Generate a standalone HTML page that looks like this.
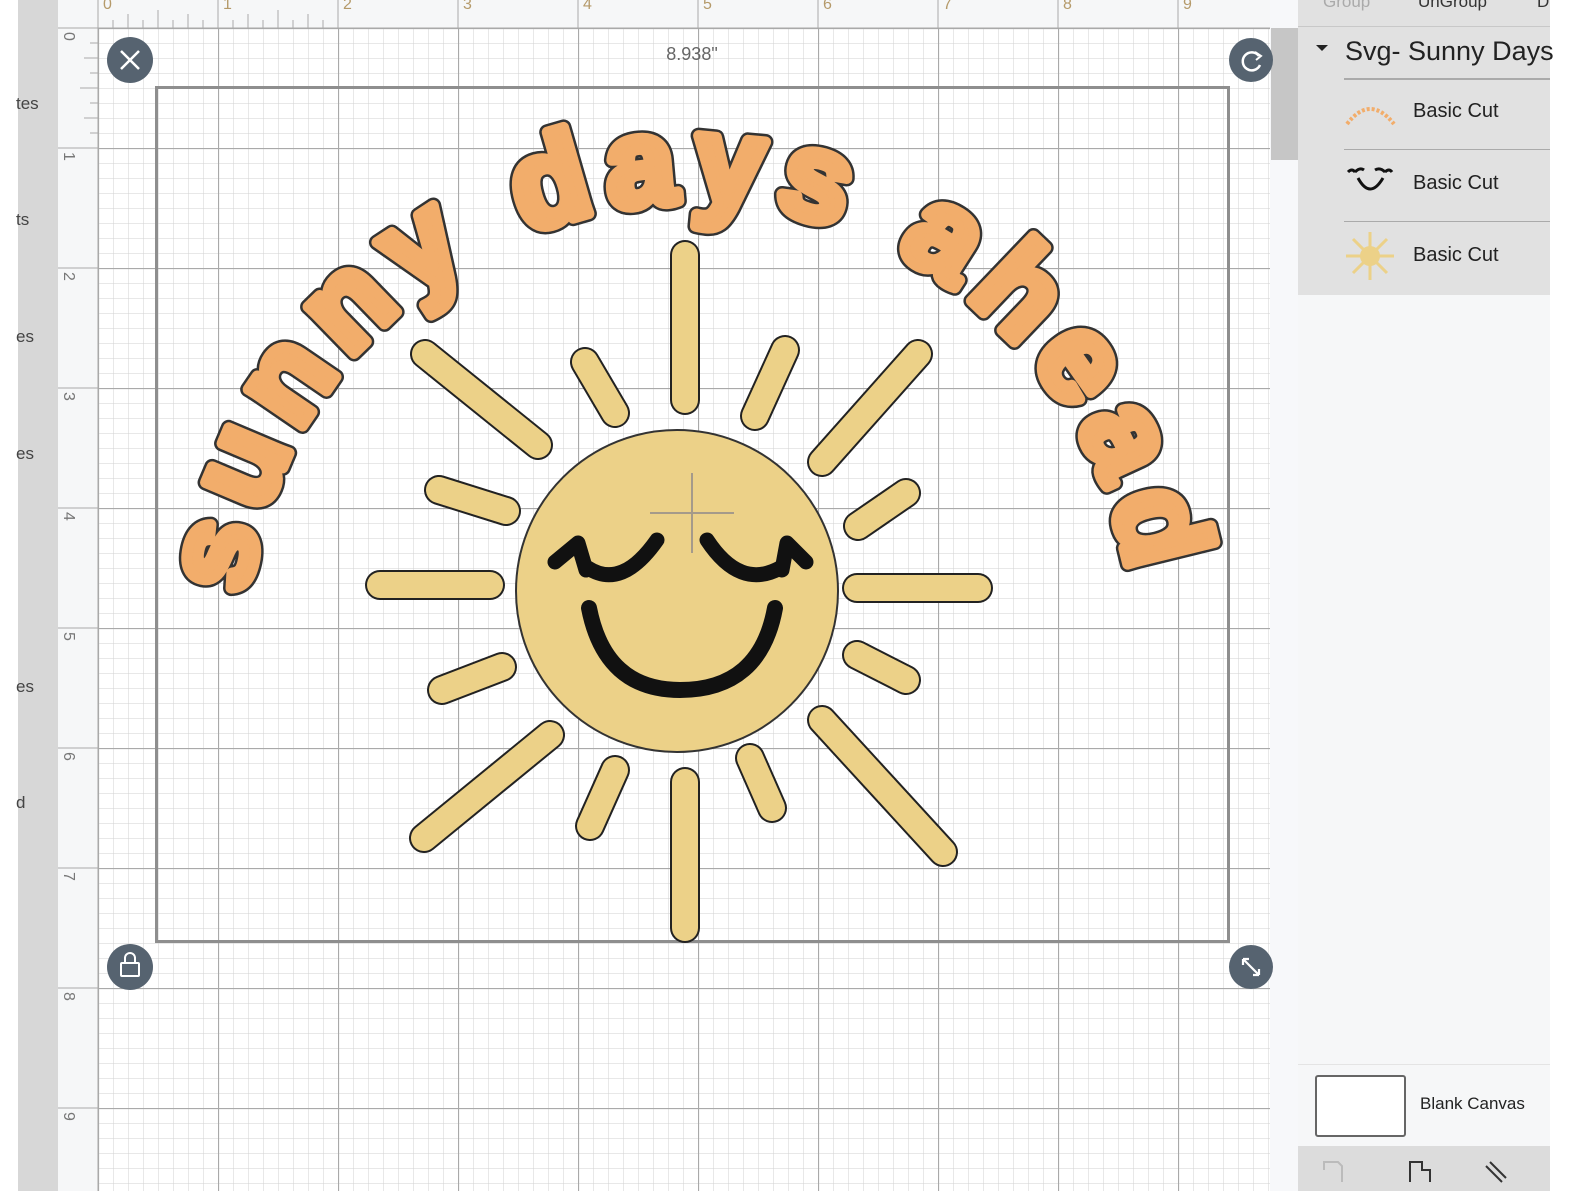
<!DOCTYPE html>
<html><head><meta charset="utf-8"><style>
body{margin:0;width:1588px;height:1191px;overflow:hidden;background:#fff;font-family:"Liberation Sans",sans-serif;position:relative}
.abs{position:absolute}
</style></head><body>
<div class="abs" style="left:18px;top:0;width:40px;height:1191px;background:#d7d7d7"></div>
<div class="abs" style="left:16px;top:94px;font-size:17px;color:#444">tes</div>
<div class="abs" style="left:16px;top:210px;font-size:17px;color:#444">ts</div>
<div class="abs" style="left:16px;top:327px;font-size:17px;color:#444">es</div>
<div class="abs" style="left:16px;top:444px;font-size:17px;color:#444">es</div>
<div class="abs" style="left:16px;top:677px;font-size:17px;color:#444">es</div>
<div class="abs" style="left:16px;top:793px;font-size:17px;color:#444">d</div>
<svg class="abs" style="left:0;top:0" width="1298" height="1191" viewBox="0 0 1298 1191">
<defs>
<pattern id="mn" x="98" y="28" width="15" height="15" patternUnits="userSpaceOnUse"><path d="M0 0V15M0 0H15" stroke="#d2d2d2" stroke-width="1" fill="none"/></pattern>
<pattern id="mj" x="98" y="28" width="120" height="120" patternUnits="userSpaceOnUse"><path d="M0.5 0V120M0 0.5H120" stroke="#a9a9a9" stroke-width="1.2" fill="none"/></pattern>
</defs>
<rect x="58" y="0" width="1240" height="1191" fill="#f6f7f8"/>
<rect x="98" y="28" width="1172" height="1163" fill="#fff"/>
<rect x="98" y="28" width="1172" height="1163" fill="url(#mn)"/>
<rect x="98" y="28" width="1172" height="1163" fill="url(#mj)"/>
<line x1="98" y1="0" x2="98" y2="1191" stroke="#a9a9a9"/>
<line x1="58" y1="28" x2="1270" y2="28" stroke="#a9a9a9"/>
<g stroke="#aaa" stroke-width="1">
<path d="M113 20V28M128 14V28M143 20V28M158 10V28M173 20V28M188 14V28M203 20V28"/>
<path d="M233 20V28M248 14V28M263 20V28M278 10V28M293 20V28M308 14V28M323 20V28"/>
<path d="M218 0V28M338 0V28M458 0V28M578 0V28M698 0V28M818 0V28M938 0V28M1058 0V28M1178 0V28"/>
<path d="M90 43H98M84 58H98M90 73H98M80 88H98M90 103H98M84 118H98M90 133H98M58 148H98M58 268H98M58 388H98M58 508H98M58 628H98M58 748H98M58 868H98M58 988H98M58 1108H98"/>
</g>
<g font-size="16" fill="#b59a6a">
<text x="103" y="9">0</text><text x="223" y="9">1</text><text x="343" y="9">2</text><text x="463" y="9">3</text><text x="583" y="9">4</text><text x="703" y="9">5</text><text x="823" y="9">6</text><text x="943" y="9">7</text><text x="1063" y="9">8</text><text x="1183" y="9">9</text>
</g>
<g font-size="16" fill="#777">
<text transform="translate(64,32) rotate(90)">0</text><text transform="translate(64,152) rotate(90)">1</text><text transform="translate(64,272) rotate(90)">2</text><text transform="translate(64,392) rotate(90)">3</text><text transform="translate(64,512) rotate(90)">4</text><text transform="translate(64,632) rotate(90)">5</text><text transform="translate(64,752) rotate(90)">6</text><text transform="translate(64,872) rotate(90)">7</text><text transform="translate(64,992) rotate(90)">8</text><text transform="translate(64,1112) rotate(90)">9</text>
</g>
<rect x="1270" y="0" width="28" height="1191" fill="#f7f8fa"/>
<rect x="1271" y="28" width="27" height="132" fill="#c6c6c6"/>
<rect x="156.5" y="87.5" width="1072" height="854" fill="none" stroke="#8e8e8e" stroke-width="3"/>
<text x="692" y="60" font-size="18" fill="#666" text-anchor="middle">8.938"</text>
<!-- rays -->
<g stroke-linecap="round" fill="none">
<g stroke="#222" stroke-width="30">
<path id="rays" d="M685 255V400M685 782V928M380 585H490M857 588H978M425 354L538 445M918 354L822 462M424 838L550 735M822 720L943 852M585 362L615 413M785 350L755 416M439 490L506 511M906 493L858 526M442 690L502 667M857 655L906 680M615 770L590 826M750 758L772 808"/>
</g>
<use href="#rays" stroke="#ecd188" stroke-width="26"/>
</g>
<circle cx="677" cy="591" r="161" fill="#ecd188" stroke="#333" stroke-width="2"/>
<path d="M650 513H734M692 473V553" stroke="#a59a8a" stroke-width="2"/>
<g stroke="#111" stroke-width="15" stroke-linecap="round" stroke-linejoin="round" fill="none">
<path d="M588 568Q622 590 657 540"/>
<path d="M555 562L578 543L586 570"/>
<path d="M707 540Q740 590 780 568"/>
<path d="M806 562L787 543L782 570"/>
<path d="M589 608Q605 690 680 690Q760 690 775 608" stroke-width="16"/>
</g>
<!-- text arc -->
<path id="arc" d="M248 596 A445 445 0 0 1 1132 596" fill="none"/>
<g font-family="Liberation Sans" font-weight="bold" font-size="124" letter-spacing="13">
<text fill="#333" stroke="#333" stroke-width="16" stroke-linejoin="round"><textPath href="#arc">sunny days ahead</textPath></text>
<text fill="#f2ad6b" stroke="#f2ad6b" stroke-width="11" stroke-linejoin="round"><textPath href="#arc">sunny days ahead</textPath></text>
</g>
<!-- buttons -->
<circle cx="130" cy="60" r="23" fill="#566370"/>
<path d="M121 51L139 69M139 51L121 69" stroke="#fff" stroke-width="2.5"/>
<circle cx="1251" cy="60" r="22" fill="#566370"/>
<path d="M1259 56A9 9 0 1 0 1260 65" stroke="#fff" stroke-width="2.5" fill="none"/><path d="M1255 52L1261 56L1256 60" stroke="#fff" stroke-width="2" fill="none"/>
<circle cx="130" cy="967" r="23" fill="#566370"/>
<rect x="121" y="963" width="18" height="13" rx="1" fill="none" stroke="#fff" stroke-width="2"/><path d="M125 963V958A5 5 0 0 1 135 958V963" stroke="#fff" stroke-width="2" fill="none"/>
<circle cx="1251" cy="967" r="22" fill="#566370"/>
<path d="M1243 959L1259 975M1243 959H1249M1243 959V965M1259 975H1253M1259 975V969" stroke="#fff" stroke-width="2.2" fill="none"/>
</svg>
<div class="abs" style="left:1298px;top:0;width:252px;height:295px;background:#e1e1e1"></div>
<div class="abs" style="left:1298px;top:26px;width:252px;height:1px;background:#c8c8c8"></div>
<div class="abs" style="left:1323px;top:-8px;font-size:17px;color:#aaa">Group</div>
<div class="abs" style="left:1418px;top:-8px;font-size:17px;color:#333">UnGroup</div>
<div class="abs" style="left:1537px;top:-8px;font-size:17px;color:#333">D</div>
<div class="abs" style="left:1316px;top:45px;width:0;height:0;border-left:6px solid transparent;border-right:6px solid transparent;border-top:6px solid #222"></div>
<div class="abs" style="left:1345px;top:36px;font-size:27px;color:#222;white-space:nowrap">Svg- Sunny Days</div>
<div class="abs" style="left:1344px;top:78px;width:206px;height:2px;background:#aaa"></div>
<div class="abs" style="left:1344px;top:149px;width:206px;height:1px;background:#aaa"></div>
<div class="abs" style="left:1344px;top:221px;width:206px;height:1px;background:#aaa"></div>
<svg class="abs" style="left:1340px;top:90px" width="60" height="190">
<path d="M7 34Q30 4 54 34" stroke="#f2ad6b" stroke-width="4" fill="none" stroke-dasharray="3 2"/>
<path d="M8 82Q12 78 15 82M15 82Q20 77 24 80M35 80Q40 77 45 82M45 82Q49 78 52 82" stroke="#111" stroke-width="3" fill="none"/>
<path d="M18 88Q30 110 43 88" stroke="#111" stroke-width="3" fill="none"/>
<g stroke="#ecd188" stroke-width="3"><path d="M30 142V190M6 166H54M13 149L47 183M47 149L13 183"/></g>
<circle cx="30" cy="166" r="10" fill="#ecd188"/>
</svg>
<div class="abs" style="left:1413px;top:100px;font-size:20px;color:#222">Basic Cut</div>
<div class="abs" style="left:1413px;top:172px;font-size:20px;color:#222">Basic Cut</div>
<div class="abs" style="left:1413px;top:244px;font-size:20px;color:#222">Basic Cut</div>
<div class="abs" style="left:1298px;top:295px;width:252px;height:896px;background:#f6f7f8"></div>
<div class="abs" style="left:1298px;top:1064px;width:252px;height:1px;background:#e4e4e4"></div>
<div class="abs" style="left:1315px;top:1075px;width:87px;height:58px;border:2px solid #666;border-radius:3px;background:#fff"></div>
<div class="abs" style="left:1420px;top:1094px;font-size:17px;color:#222">Blank Canvas</div>
<div class="abs" style="left:1298px;top:1146px;width:252px;height:45px;background:#dcdcdc"></div>
<svg class="abs" style="left:1318px;top:1152px" width="200" height="39"><path d="M6 18V10H20L24 14V30" stroke="#bbb" stroke-width="2" fill="none"/><path d="M92 30V10H104V18H112V30" stroke="#333" stroke-width="2" fill="none"/><path d="M168 14L184 30M172 10L188 26" stroke="#333" stroke-width="2" fill="none"/></svg>
</body></html>
